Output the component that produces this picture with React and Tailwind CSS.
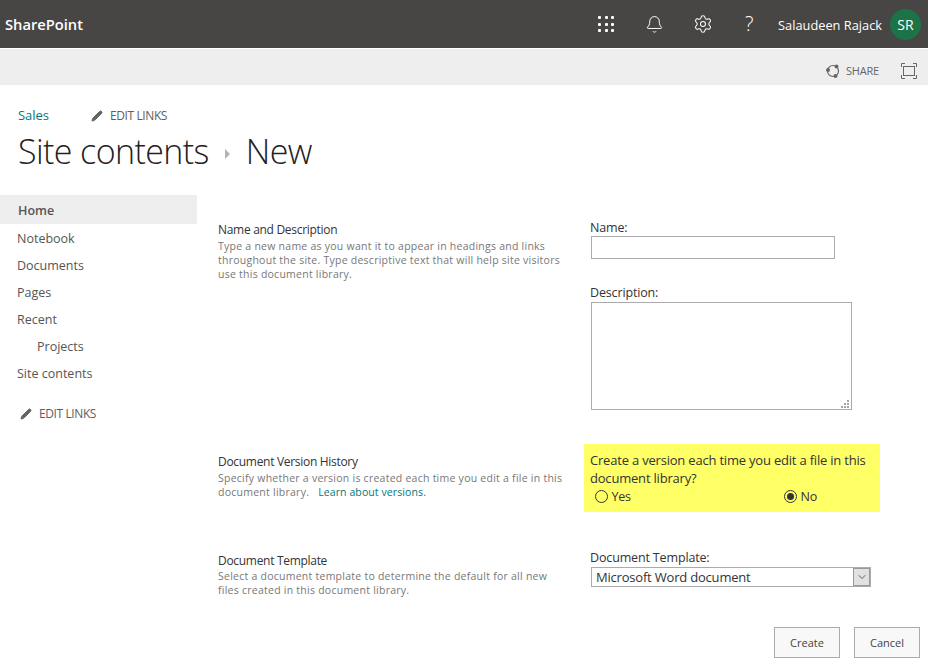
import { Bell, Settings, Pencil, ChevronDown } from 'lucide-react'

const navItems = ['Notebook', 'Documents', 'Pages', 'Recent']

const EditLinks = ({ className }) => (
  <span className={`flex items-center text-[12px] leading-4 tracking-[-0.4px] text-[#605e5c] ${className}`}>
    <Pencil size={12} fill="#666" stroke="#666" className="mr-[7px]" />
    EDIT LINKS
  </span>
)

const Waffle = () => (
  <span className="grid grid-cols-3 gap-[3.5px] w-[16px]">
    {[...Array(9).keys()].map((i) => (
      <span key={i} className="w-[3px] h-[3px] rounded-[1px] bg-white" />
    ))}
  </span>
)

const Radio = ({ label, checked, className }) => (
  <span className={`flex items-center text-[12.5px] ${className}`}>
    <span className="w-[13px] h-[13px] rounded-full border border-[#333] flex items-center justify-center mr-[3.5px]">
      {checked && <span className="w-[7px] h-[7px] rounded-full bg-[#333]" />}
    </span>
    <span className="pt-px">{label}</span>
  </span>
)

const Section = ({ title, children, descClass = 'mt-[1px]' }) => (
  <div className="w-[350px] pt-px">
    <h3 className="text-[12px] leading-4 tracking-[-0.3px] text-[#333]">{title}</h3>
    <p className={`text-[10.5px] leading-[14px] tracking-[0.25px] text-[#777] ${descClass}`}>{children}</p>
  </div>
)

export default function App() {
  return (
    <div className="w-[928px] h-[672px] overflow-hidden bg-white font-['Open_Sans',sans-serif] text-[#333]">
      <header className="h-12 bg-[#484644] flex items-center text-white">
        <span className="ml-[5px] mt-px text-[14.7px] font-semibold">SharePoint</span>
        <div className="ml-auto flex items-center">
          <Waffle />
          <Bell size={19} strokeWidth={1.25} className="ml-[31px]" />
          <Settings size={20} strokeWidth={1.25} className="ml-[29px]" />
          <span className="ml-[32px] text-[20px] font-light leading-none w-[12px]">?</span>
          <span className="ml-[21px] mt-[3px] text-[12.8px]">Salaudeen Rajack</span>
          <span className="ml-[8px] mr-[7px] w-[31px] h-[31px] rounded-full bg-[#1b7347] flex items-center justify-center text-[14px]">SR</span>
        </div>
      </header>

      <div className="mt-px h-9 bg-[#eeeeee] flex items-center justify-end pt-[8px] text-[#666]">
        <svg width="14" height="14" viewBox="0 0 14 14" fill="none" className="mr-[6px]">
          <circle cx="7" cy="7" r="5.5" stroke="#666" strokeWidth="1.2" />
          <circle cx="2" cy="6" r="2" fill="#666" />
          <circle cx="10.5" cy="2.5" r="2" fill="#666" />
          <circle cx="9.5" cy="12" r="2" fill="#666" />
        </svg>
        <span className="text-[11px] tracking-[-0.2px]">SHARE</span>
        <svg width="16" height="16" viewBox="0 0 16 16" fill="none" stroke="#666" className="ml-[22px] mr-[11px]">
          <path d="M.5 4V.5H4M12 .5h3.5V4M15.5 12v3.5H12M4 15.5H.5V12" />
          <rect x="2.5" y="3.5" width="11" height="9" />
        </svg>
      </div>

      <div className="pl-[18px] pt-[23px] h-[110px]">
        <div className="flex items-center h-4">
          <span className="text-[13px] tracking-[-0.05px] text-[#03787c] w-[73px]">Sales</span>
          <EditLinks />
        </div>
        <div className="flex items-center mt-[5px] text-[34px] leading-[44px] font-light tracking-[-0.6px] text-[#222]">
          <span>Site contents</span>
          <span className="mx-[16px] mt-[6px] w-0 h-0 border-y-[5px] border-y-transparent border-l-[5px] border-l-[#b3b3b3]" />
          <span>New</span>
        </div>
      </div>

      <div className="flex">
        <nav className="w-[197px] text-[12.5px] text-[#555]">
          <div className="h-[29px] bg-[#eeeeee] pl-[18px] pt-[3px] flex items-center font-semibold">Home</div>
          <ul className="mt-[2px] pl-[17px]">
            {navItems.map((item) => (
              <li key={item} className="h-[27px] flex items-center">{item}</li>
            ))}
            <li className="h-[27px] flex items-center pl-[20px]">Projects</li>
            <li className="h-[27px] flex items-center">Site contents</li>
          </ul>
          <EditLinks className="mt-[18px] ml-[20px]" />
        </nav>

        <main className="ml-[21px] flex-1">
          <div className="flex pt-[26px]">
            <Section title="Name and Description">
              Type a new name as you want it to appear in headings and links throughout the site. Type descriptive text that will help site visitors use this document library.
            </Section>
            <div className="ml-[22px]">
              <label className="block text-[12.5px] tracking-[-0.15px] leading-4 -mt-[1px]">Name:</label>
              <input className="block ml-px w-[244px] h-[23px] border border-[#ababab] bg-white" />
              <label className="block mt-[26px] text-[12.5px] tracking-[-0.15px] leading-4">Description:</label>
              <div className="relative ml-px mt-[1px] w-[261px] h-[108px]">
                <textarea className="block w-full h-full resize-none border border-[#ababab] bg-white" />
                <svg width="8" height="8" viewBox="0 0 8 8" fill="#a6a6a6" className="absolute right-[3px] bottom-[2px]">
                  <rect x="6" y="0" width="2" height="2" />
                  <rect x="3" y="3" width="2" height="2" />
                  <rect x="6" y="3" width="2" height="2" />
                  <rect x="0" y="6" width="2" height="2" />
                  <rect x="3" y="6" width="2" height="2" />
                  <rect x="6" y="6" width="2" height="2" />
                </svg>
              </div>
            </div>
          </div>

          <div className="flex mt-[34px]">
            <div className="pt-[9px]">
              <Section title="Document Version History">
                Specify whether a version is created each time you edit a file in this document library.
                <a className="ml-[9px] tracking-[0.1px] text-[#03787c] font-medium">Learn about versions.</a>
              </Section>
            </div>
            <div className="ml-[16px] w-[296px] h-[68px] bg-[#ffff66] pl-[6px] pt-[7px] text-[13px] leading-[18px] tracking-[-0.2px]">
              <p>Create a version each time you edit a file in this document library?</p>
              <div className="flex pl-[5px]">
                <Radio label="Yes" className="w-[189px]" />
                <Radio label="No" checked />
              </div>
            </div>
          </div>

          <div className="flex mt-[37px]">
            <div className="pt-[3px]">
              <Section title="Document Template" descClass="mt-0">
                Select a document template to determine the default for all new files created in this document library.
              </Section>
            </div>
            <div className="ml-[22px] pt-px">
              <label className="block text-[12.5px] tracking-[-0.15px] leading-4">Document Template:</label>
              <div className="ml-px mt-[1px] w-[280px] h-[20px] border border-[#ababab] flex items-center justify-between text-[13px] tracking-[-0.2px] pl-[4px]">
                <span className="pt-px">Microsoft Word document</span>
                <span className="w-[17px] h-[18px] bg-[#e1e1e1] border border-[#999] flex items-center justify-center">
                  <ChevronDown size={12} strokeWidth={1.5} className="text-[#333]" />
                </span>
              </div>
            </div>
          </div>

          <div className="flex justify-end gap-[14px] mt-[30px] pr-[8px]">
            <button className="w-[66px] h-[31px] pt-[2px] border border-[#ababab] bg-[#f8f8f8] text-[11px] text-[#444]">Create</button>
            <button className="w-[66px] h-[31px] pt-[2px] border border-[#ababab] bg-[#f8f8f8] text-[11px] text-[#444]">Cancel</button>
          </div>
        </main>
      </div>
    </div>
  )
}
